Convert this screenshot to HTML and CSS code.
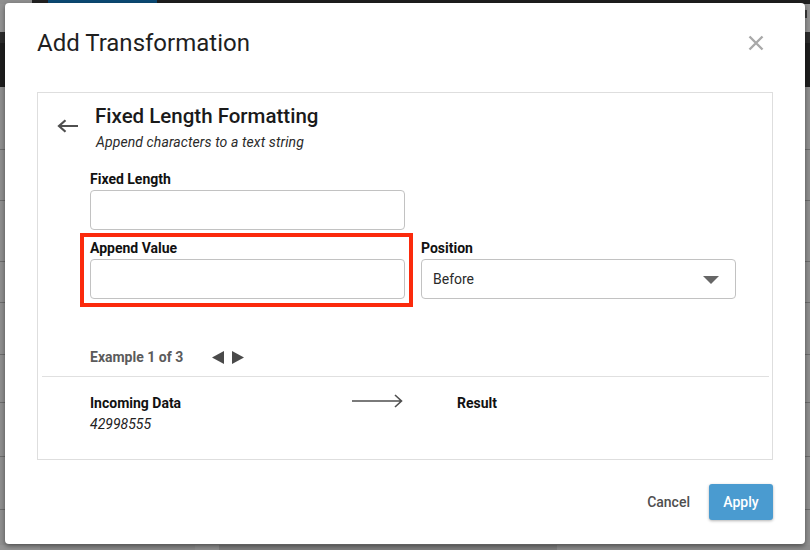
FILE: index.html
```html
<!DOCTYPE html>
<html lang="en">
<head>
<meta charset="utf-8">
<title>Add Transformation</title>
<link rel="stylesheet" href="styles.css">
</head>
<body>
<div class="backdrop">
  <div class="bg-nav"><span class="bg-nav-edge"></span><span class="bg-nav-dark"></span><span class="bg-nav-tab"></span></div>
  <div class="bg-toolbar"><span class="bg-tool-mark"></span></div>
  <div class="bg-band"></div>
  <div class="bg-row h63"></div>
  <div class="bg-row h51"></div>
  <div class="bg-row h61"></div>
  <div class="bg-row h41"></div>
  <div class="bg-row h52"></div>
  <div class="bg-row h48"></div>
  <div class="bg-row h54"></div>
  <div class="bg-row h53"></div>
  <div class="bg-last"></div>
  <div class="bg-foot"><span class="seg s1"></span><span class="seg s2"></span><span class="seg s3"></span><span class="seg s4"></span><span class="seg s5"></span></div>
</div>

<div class="modal" role="dialog" aria-labelledby="modal-title">
  <header class="modal-head">
    <h1 class="modal-title" id="modal-title">Add Transformation</h1>
    <button class="close" type="button" aria-label="Close">
      <svg width="16" height="16" viewBox="0 0 16 16"><path d="M1.5 1.5 L14.5 14.5 M14.5 1.5 L1.5 14.5" stroke="#a9a9a9" stroke-width="2.4" fill="none"/></svg>
    </button>
  </header>

  <section class="panel">
    <div class="panel-head">
      <svg class="back" width="22" height="14" viewBox="0 0 22 14"><path d="M21 7 H2.5 M8.5 1.2 L2 7 L8.5 12.8" stroke="#4f4f4f" stroke-width="2.2" fill="none"/></svg>
      <div class="panel-titles">
        <h2 class="panel-title">Fixed Length Formatting</h2>
        <p class="subtitle">Append characters to a text string</p>
      </div>
    </div>

    <div class="form">
      <div class="field">
        <label class="label">Fixed Length</label>
        <div class="input"></div>
      </div>
      <div class="field-row">
        <div class="field highlighted">
          <span class="highlight"></span>
          <label class="label">Append Value</label>
          <div class="input"></div>
        </div>
        <div class="field">
          <label class="label">Position</label>
          <div class="input select">
            <span class="select-value">Before</span>
            <svg width="16" height="8" viewBox="0 0 16 8"><path d="M0 0 H16 L8 8 Z" fill="#666"/></svg>
          </div>
        </div>
      </div>
      <div class="example-nav">
        <span class="example-text">Example 1 of 3</span>
        <svg class="tri" width="12" height="13" viewBox="0 0 12 13"><path d="M12 0 V13 L0 6.5 Z" fill="#4a4a4a"/></svg>
        <svg class="tri" width="12" height="13" viewBox="0 0 12 13"><path d="M0 0 V13 L12 6.5 Z" fill="#4a4a4a"/></svg>
      </div>
    </div>

    <hr class="sep">

    <div class="example">
      <div class="ex-col">
        <div class="ex-label">Incoming Data</div>
        <div class="ex-value">42998555</div>
      </div>
      <svg class="long-arrow" width="51" height="14" viewBox="0 0 51 14"><path d="M0 7 H49 M43 1 L49.5 7 L43 13" stroke="#4f4f4f" stroke-width="1.6" fill="none"/></svg>
      <div class="ex-col">
        <div class="ex-label">Result</div>
      </div>
    </div>
  </section>

  <footer class="modal-foot">
    <button class="btn-cancel" type="button">Cancel</button>
    <button class="btn-apply" type="button">Apply</button>
  </footer>
</div>
</body>
</html>
```

FILE: styles.css
```css
* { box-sizing: border-box; }

html, body {
  margin: 0;
  padding: 0;
}

body {
  width: 810px;
  height: 550px;
  overflow: hidden;
  position: relative;
  font-family: Roboto, "Liberation Sans", Arial, sans-serif;
  background: #8f8f8f;
}

/* ---------- dimmed page behind the dialog ---------- */
.backdrop {
  display: flex;
  flex-direction: column;
  height: 550px;
}

.bg-nav {
  display: flex;
  height: 4px;
  background: #1f1f1f;
}
.bg-nav-edge { width: 32px; background: #8f8f8f; }
.bg-nav-dark { width: 16px; background: #222; }
.bg-nav-tab { width: 109px; background: #0b4a74; }

.bg-toolbar {
  height: 28px;
  background: #939393;
  display: flex;
  justify-content: flex-end;
  align-items: center;
  overflow: hidden;
}
.bg-tool-mark {
  width: 4px;
  height: 8px;
  border-left: 2px solid #3a3a3a;
  margin-right: 1px;
  margin-top: -8px;
}

.bg-band {
  height: 55px;
  background: #1e1e1e;
  border-top: 11px solid #2c2c2c;
}

.bg-row {
  border-bottom: 1px solid #6c6c6c;
  background: #8f8f8f;
}
.h63 { height: 63px; }
.h51 { height: 51px; }
.h61 { height: 61px; }
.h41 { height: 41px; }
.h52 { height: 52px; }
.h48 { height: 48px; }
.h54 { height: 54px; }
.h53 { height: 53px; }
.bg-last { height: 35px; background: #8f8f8f; }

.bg-foot {
  display: flex;
  flex: 1;
}
.seg { height: 100%; }
.s1 { width: 40px; background: #949494; }
.s2 { width: 155px; background: #8a8a8a; }
.s3 { width: 24px; background: #909090; }
.s4 { width: 338px; background: #7e7e7e; }
.s5 { flex: 1; background: #8c8c8c; }

/* ---------- dialog (overlay) ---------- */
.modal {
  position: absolute;
  left: 5px;
  top: 3px;
  width: 800px;
  height: 541px;
  background: #fff;
  border-radius: 4px;
  box-shadow: 0 2px 5px rgba(0, 0, 0, 0.45);
  padding: 0 32px;
  display: flex;
  flex-direction: column;
}

.modal-head {
  height: 89px;
  display: flex;
  justify-content: space-between;
  align-items: flex-start;
  padding-top: 26px;
}

.modal-title {
  margin: 0;
  font-size: 24px;
  line-height: 28px;
  font-weight: 400;
  color: #1f1f1f;
}

.close {
  border: 0;
  background: none;
  padding: 0;
  margin: 6px 9px 0 0;
  width: 16px;
  height: 16px;
  display: block;
  cursor: pointer;
}
.close svg { display: block; }

/* ---------- panel ---------- */
.panel {
  border: 1px solid #dedede;
  height: 368px;
  padding: 11px 0 0;
  display: flex;
  flex-direction: column;
}

.panel-head {
  display: flex;
  align-items: flex-start;
  padding-left: 19px;
}

.back {
  display: block;
  margin-top: 15px;
  margin-right: 16px;
}

.panel-title {
  margin: 0;
  font-size: 20.5px;
  line-height: 24px;
  font-weight: 500;
  color: #1a1a1a;
}

.subtitle {
  margin: 5px 0 0 1px;
  font-size: 14px;
  line-height: 18px;
  font-style: italic;
  color: #2a2a2a;
  letter-spacing: 0.1px;
}

.form {
  padding-left: 52px;
  margin-top: 19px;
  display: flex;
  flex-direction: column;
}

.field {
  width: 315px;
  display: flex;
  flex-direction: column;
  position: relative;
}

.label {
  font-size: 14px;
  line-height: 18px;
  font-weight: 700;
  color: #111;
  margin-bottom: 2px;
}

.input {
  height: 40px;
  border: 1px solid #c2c2c2;
  border-radius: 4px;
  background: #fff;
}

.field-row {
  display: flex;
  gap: 16px;
  margin-top: 9px;
}

.highlight {
  position: absolute;
  left: -10px;
  top: -6px;
  width: 333px;
  height: 74px;
  border: 4px solid #fb2a0c;
  pointer-events: none;
}

.select {
  display: flex;
  align-items: center;
  justify-content: space-between;
  padding: 0 16px 0 11px;
}
.select-value {
  font-size: 14px;
  color: #2a2a2a;
}
.select svg { display: block; margin-top: 1px; }

.example-nav {
  display: flex;
  align-items: center;
  margin-top: 49px;
  height: 18px;
}
.example-text {
  font-size: 14px;
  line-height: 18px;
  font-weight: 700;
  color: #5b5b5b;
  margin-right: 29px;
}
.tri { display: block; margin-right: 8px; }

.sep {
  border: 0;
  border-top: 1px solid #e0e0e0;
  margin: 10px 3px 0 4px;
  height: 0;
}

.example {
  display: flex;
  align-items: flex-start;
  padding-left: 52px;
  margin-top: 16px;
}
.ex-col { display: flex; flex-direction: column; }
.ex-col:first-child { width: 262px; }
.ex-label {
  font-size: 14px;
  line-height: 20px;
  font-weight: 700;
  color: #111;
}
.ex-value {
  font-size: 14px;
  line-height: 20px;
  font-style: italic;
  color: #222;
  margin-top: 1px;
}
.long-arrow {
  display: block;
  margin-top: 1px;
  margin-right: 54px;
}

/* ---------- footer ---------- */
.modal-foot {
  display: flex;
  justify-content: flex-end;
  align-items: center;
  margin-top: 24px;
  gap: 19px;
}

.btn-cancel {
  border: 0;
  background: none;
  font-family: inherit;
  font-size: 14px;
  font-weight: 500;
  color: #4f4f4f;
  padding: 0;
}

.btn-apply {
  width: 64px;
  height: 36px;
  border: 0;
  border-radius: 3px;
  background: #4a9bd0;
  color: #fff;
  font-family: inherit;
  font-size: 14px;
  font-weight: 500;
  box-shadow: 0 1px 3px rgba(0, 0, 0, 0.3);
}
```
